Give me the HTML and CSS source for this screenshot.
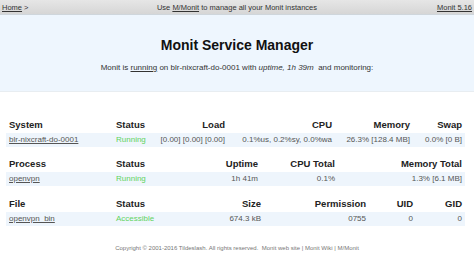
FILE: index.html
```html
<!DOCTYPE html>
<html lang="en">
<head>
    <meta charset="UTF-8">
    <meta name="viewport" content="width=device-width, initial-scale=1.0">
    <title>Monit: blr-nixcraft-do-0001</title>
    <link rel="stylesheet" href="styles.css">
</head>
<body>
    <div class="nav">
        <div class="nav-left"><a href="#">Home</a> &gt;</div>
        <div class="nav-center">Use <a href="#">M/Monit</a> to manage all your Monit instances</div>
        <div class="nav-right"><a href="#">Monit 5.16</a></div>
    </div>

    <div class="header">
        <h1>Monit Service Manager</h1>
        <p>Monit is <a href="#">running</a> on blr-nixcraft-do-0001 with <i>uptime, 1h 39m</i> &nbsp;and monitoring:</p>
    </div>

    <div class="table system">
        <div class="th">System</div>
        <div class="th">Status</div>
        <div class="th right">Load</div>
        <div class="th right">CPU</div>
        <div class="th right">Memory</div>
        <div class="th right">Swap</div>
        <div class="td"><a href="#">blr-nixcraft-do-0001</a></div>
        <div class="td ok">Running</div>
        <div class="td right">[0.00]&nbsp;[0.00]&nbsp;[0.00]</div>
        <div class="td right">0.1%us,&nbsp;0.2%sy,&nbsp;0.0%wa</div>
        <div class="td right">26.3% [128.4 MB]</div>
        <div class="td right">0.0% [0 B]</div>
    </div>

    <div class="table process">
        <div class="th">Process</div>
        <div class="th">Status</div>
        <div class="th right">Uptime</div>
        <div class="th right">CPU Total</div>
        <div class="th right">Memory Total</div>
        <div class="td"><a href="#">openvpn</a></div>
        <div class="td ok">Running</div>
        <div class="td right">1h 41m</div>
        <div class="td right">0.1%</div>
        <div class="td right">1.3% [6.1 MB]</div>
    </div>

    <div class="table file">
        <div class="th">File</div>
        <div class="th">Status</div>
        <div class="th right">Size</div>
        <div class="th right">Permission</div>
        <div class="th right">UID</div>
        <div class="th right">GID</div>
        <div class="td"><a href="#">openvpn_bin</a></div>
        <div class="td ok">Accessible</div>
        <div class="td right">674.3 kB</div>
        <div class="td right">0755</div>
        <div class="td right">0</div>
        <div class="td right">0</div>
    </div>

    <div class="footer">
        Copyright &copy; 2001-2016 <a href="#">Tildeslash</a>. All rights reserved.
        &nbsp;<a href="#">Monit web site</a> | <a href="#">Monit Wiki</a> | <a href="#">M/Monit</a>
    </div>
</body>
</html>
```

FILE: styles.css
```css
body {
    font-family: 'Liberation Sans', Arial, sans-serif;
    color: #222;
    margin: 0;
    background-color: #ffffff;
    overflow: hidden;
}

a {
    color: #333;
    text-decoration: underline;
}

.nav {
    display: flex;
    align-items: center;
    height: 14px;
    font-size: 7.5px;
    color: #333;
    background: linear-gradient(#e6e6e6, #d6d6d6);
    border-bottom: 1px solid #cfd6dc;
    white-space: nowrap;
    padding: 0 2px;
}

.nav-left {
    width: 120px;
}

.nav-center {
    flex: 1;
    text-align: center;
}

.nav-right {
    width: 120px;
    text-align: right;
}

.header {
    background-color: #eef6fe;
    height: 75px;
    text-align: center;
    padding-top: 1px;
    border-bottom: 1px solid #e8edf1;
}

.header h1 {
    font-size: 14px;
    font-weight: bold;
    margin: 21px 0 0;
    color: #111;
}

.header p {
    font-size: 8px;
    margin: 10px 0 0;
    color: #333;
}

.table {
    display: grid;
    margin: 0 9px 0 6px;
    white-space: nowrap;
}

.system {
    grid-template-columns: 107px 42px 73px 107px 78px 52px;
    margin-top: 25px;
}

.process {
    grid-template-columns: 107px 55px 93px 77px 127px;
    margin-top: 9px;
}

.file {
    grid-template-columns: 107px 55px 96px 105px 47px 49px;
    margin-top: 10px;
}

.th {
    font-size: 9.5px;
    font-weight: bold;
    color: #222;
    padding: 0 3px;
    height: 16px;
    line-height: 16px;
}

.td {
    font-size: 8px;
    color: #555;
    padding: 0 3px;
    height: 14px;
    line-height: 14px;
    background-color: #eef5fc;
}

.td a {
    color: #555;
}

.right {
    text-align: right;
}

.ok {
    color: #5fd35f;
}

.footer {
    margin-top: 19px;
    text-align: center;
    font-size: 6px;
    color: #777;
}

.footer a {
    color: #777;
}
```
